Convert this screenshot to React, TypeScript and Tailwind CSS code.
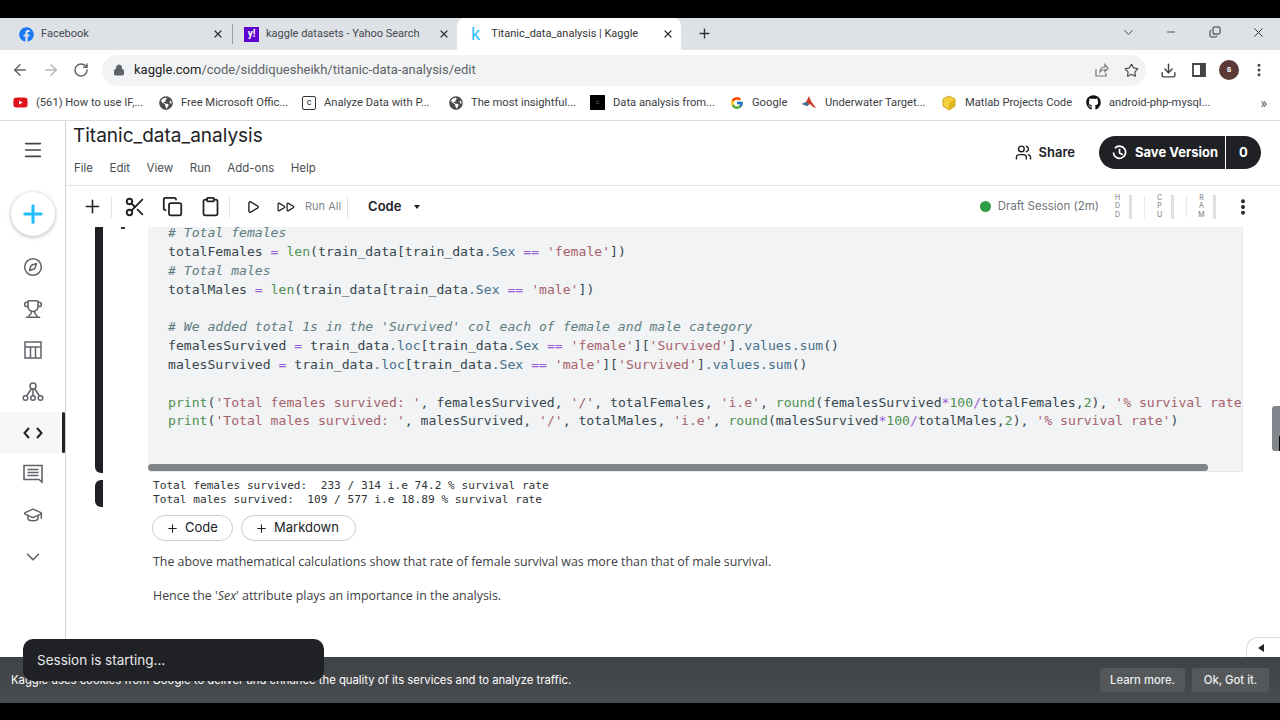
import type { ReactNode } from 'react';
import { Compass, Trophy, GraduationCap, ChevronDown, Scissors, Copy, Clipboard, Plus, Menu, Users, X, ArrowLeft, ArrowRight, RotateCw, Lock, Star, Download, Minus, MoreVertical, Play } from 'lucide-react';
import { FaFacebook, FaYoutube, FaGithub, FaGlobeAmericas } from 'react-icons/fa';
import { FcGoogle } from 'react-icons/fc';

const Cm = ({ children }: { children: ReactNode }) => <span className="italic text-[#5f7d80]">{children}</span>;
const Op = ({ children }: { children: ReactNode }) => <span className="text-[#9a5fd6]">{children}</span>;
const Fn = ({ children }: { children: ReactNode }) => <span className="text-[#4f9150]">{children}</span>;
const St = ({ children }: { children: ReactNode }) => <span className="text-[#a9626b]">{children}</span>;
const At = ({ children }: { children: ReactNode }) => <span className="text-[#47708c]">{children}</span>;

const bookmarks = [
  { w: 'w-[146px]', label: '(561) How to use IF,...', icon: <FaYoutube className="w-[15px] h-[15px] text-[#e0101c]" /> },
  { w: 'w-[143px]', label: 'Free Microsoft Offic...', icon: <FaGlobeAmericas className="w-[14px] h-[14px] text-[#4a4d50]" /> },
  { w: 'w-[147px]', label: 'Analyze Data with P...', icon: <span className="flex w-[14px] h-[14px] items-center justify-center border border-[#333] rounded-[2px] text-[9px] leading-none text-[#222]">c</span> },
  { w: 'w-[141px]', label: 'The most insightful...', icon: <FaGlobeAmericas className="w-[14px] h-[14px] text-[#4a4d50]" /> },
  { w: 'w-[140px]', label: 'Data analysis from...', icon: <span className="flex w-[15px] h-[15px] items-center justify-center bg-black text-[5px] leading-none text-white">:::</span> },
  { w: 'w-[71px]', label: 'Google', icon: <FcGoogle className="w-[14px] h-[14px]" /> },
  { w: 'w-[140px]', label: 'Underwater Target...', icon: (
    <svg viewBox="0 0 16 16" className="w-[16px] h-[16px]"><path d="M1 9l4-2 3-6 2 5 5 7-3-1-3-3-3 2z" fill="#c8402a" /><path d="M1 9l4-2 3 2-2 2z" fill="#3a6ea5" /></svg>
  ) },
  { w: 'w-[145px]', label: 'Matlab Projects Code', icon: (
    <svg viewBox="0 0 16 16" className="w-[16px] h-[16px]"><path d="M8 1l6 3v7l-6 4-6-4V4z" fill="#f4d13d" stroke="#c9a520" /><path d="M8 8l6-4v7l-6 4z" fill="#e3b51e" /></svg>
  ) },
  { w: 'w-[146px]', label: 'android-php-mysql...', icon: <FaGithub className="w-[15px] h-[15px] text-[#111]" /> },
];

function Tabs() {
  return (
    <div className="h-[32px] bg-[#dee1e6] flex items-end text-[11px] text-[#45494d] font-['Roboto',sans-serif]">
      <div className="w-[232px] h-full flex items-center pl-[19px] pr-[8px] gap-[7px]">
        <FaFacebook className="w-[15px] h-[15px] text-[#1877f2]" />
        <span className="flex-1">Facebook</span>
        <X className="w-[12px] h-[12px] text-[#333]" strokeWidth={2.5} />
      </div>
      <div className="w-px h-[20px] mb-[6px] bg-[#9aa0a6]" />
      <div className="w-[224px] h-full flex items-center pl-[11px] pr-[7px] gap-[7px]">
        <span className="flex w-[15px] h-[15px] items-center justify-center bg-[#5f01d1] text-[10px] font-bold leading-none text-white">y!</span>
        <span className="flex-1 whitespace-nowrap overflow-hidden">kaggle datasets - Yahoo Search</span>
        <X className="w-[12px] h-[12px] text-[#333]" strokeWidth={2.5} />
      </div>
      <div className="w-[224px] h-full bg-white rounded-t-[8px] flex items-center pl-[14px] pr-[7px] gap-[11px] text-[#333]">
        <span className="text-[17px] leading-none text-[#20beff] font-['Inter',sans-serif]">k</span>
        <span className="flex-1 whitespace-nowrap">Titanic_data_analysis | Kaggle</span>
        <X className="w-[12px] h-[12px] text-[#333]" strokeWidth={2.5} />
      </div>
      <Plus className="ml-[16px] mb-[9px] w-[15px] h-[15px] text-[#333]" strokeWidth={2.2} />
      <div className="flex-1 h-full flex items-center justify-end pr-[14px] text-[#333]">
        <ChevronDown className="w-[15px] h-[15px] -mt-[4px]" strokeWidth={1.4} />
        <Minus className="ml-[29px] w-[12px] h-[12px] -mt-[4px]" strokeWidth={1.6} />
        <Copy className="ml-[32px] w-[12px] h-[12px] -mt-[4px] -scale-y-100" strokeWidth={2} />
        <X className="ml-[30px] w-[15px] h-[15px] -mt-[4px]" strokeWidth={1.6} />
      </div>
    </div>
  );
}

function AddressBar() {
  return (
    <div className="h-[36px] pt-[4px] bg-white flex items-center pl-[11px] pr-[13px] text-[#5f6368] font-['Roboto',sans-serif]">
      <ArrowLeft className="w-[18px] h-[18px]" strokeWidth={2} />
      <ArrowRight className="ml-[13px] w-[18px] h-[18px] text-[#b5b8bc]" strokeWidth={2} />
      <RotateCw className="ml-[13px] w-[16px] h-[16px]" strokeWidth={2.2} />
      <div className="ml-[13px] w-[1044px] h-[31px] rounded-full bg-[#f1f3f4] flex items-center pl-[11px] pr-[7px]">
        <Lock className="w-[12px] h-[12px] text-[#5f6368]" fill="#5f6368" />
        <span className="ml-[9px] text-[13px] text-[#5f6368] flex-1 whitespace-nowrap">
          <span className="text-[#222]">kaggle.com</span>/code/siddiquesheikh/titanic-data-analysis/edit
        </span>
        <svg viewBox="0 0 16 16" className="w-[16px] h-[16px] text-[#777]" fill="none" stroke="currentColor" strokeWidth="1.2"><path d="M3 7v7h10v-3M7 10c0-3 2-5 5-5V2.500l3 4-3 3V7.500c-2 0-4 1-5 2.500z" /></svg>
        <Star className="ml-[15px] w-[15px] h-[15px] text-[#444]" strokeWidth={1.8} />
      </div>
      <Download className="ml-[14px] w-[17px] h-[17px] text-[#444]" strokeWidth={2} />
      <svg viewBox="0 0 14 14" className="ml-[15px] w-[14px] h-[14px] text-[#444]"><path d="M1 1h12v12H1z" fill="none" stroke="currentColor" strokeWidth="1.800" /><path d="M8 1h5v12H8z" fill="currentColor" /></svg>
      <span className="ml-[13px] flex w-[20px] h-[20px] items-center justify-center rounded-full bg-[#5b3a36] text-[9px] font-bold text-white">s</span>
      <MoreVertical className="ml-[12px] w-[16px] h-[16px] text-[#444]" strokeWidth={2.500} />
    </div>
  );
}

function Bookmarks() {
  return (
    <div className="h-[35px] bg-white border-b border-[#d8dadd] flex items-center pl-[13px] pr-[13px] text-[11.200px] text-[#3c4043] font-['Roboto',sans-serif]">
      {bookmarks.map((b) => (
        <div key={b.label} className={`${b.w} flex items-center gap-[8px] whitespace-nowrap`}>
          {b.icon}
          <span>{b.label}</span>
        </div>
      ))}
      <span className="ml-auto text-[14px] leading-none text-[#555]">»</span>
    </div>
  );
}

function Sidebar() {
  const icon = 'w-[20px] h-[20px] text-[#5f6368]';
  return (
    <aside className="w-[66px] shrink-0 border-r border-[#d0d2d4] flex flex-col items-center">
      <Menu className="ml-px mt-[18px] w-[22px] h-[22px] text-[#444]" strokeWidth={1.800} />
      <button className="ml-px mt-[31px] w-[44px] h-[44px] rounded-full bg-white shadow-[0_1px_4px_rgba(0,0,0,0.3)] flex items-center justify-center">
        <Plus className="w-[28px] h-[28px] text-[#20beff]" strokeWidth={2.6} />
      </button>
      <div className="mt-[10px] w-full flex flex-col items-center">
        <div className="pl-px h-[42px] flex items-center"><Compass className={icon} strokeWidth={1.800} /></div>
        <div className="pl-px h-[41px] flex items-center"><Trophy className={icon} strokeWidth={1.800} /></div>
        <div className="pl-px h-[42px] flex items-center">
          <svg viewBox="0 0 18 18" className="w-[18px] h-[18px] text-[#5f6368]" fill="none" stroke="currentColor" strokeWidth="1.500"><path d="M1 1h16v16H1zM1 6h16M6.500 6v11M11.500 6v11" /></svg>
        </div>
        <div className="pl-px h-[41px] flex items-center">
          <svg viewBox="0 0 22 20" className="w-[22px] h-[20px] text-[#5f6368]" fill="none" stroke="currentColor" strokeWidth="1.500"><circle cx="11" cy="4" r="3" /><circle cx="3.500" cy="16" r="2.300" /><circle cx="11" cy="16" r="2.300" /><circle cx="18.500" cy="16" r="2.300" /><path d="M9.500 6.500L4.500 14M11 7v7M12.500 6.500L17.500 14" /></svg>
        </div>
        <div className="relative pl-px w-full h-[41px] bg-[#f7f7f8] flex items-center justify-center">
          <svg viewBox="0 0 20 12" className="w-[20px] h-[12px] text-[#202124]" fill="none" stroke="currentColor" strokeWidth="2"><path d="M6 1L1.500 6 6 11M14 1l4.500 5L14 11" /></svg>
          <span className="absolute right-0 top-0 w-[3px] h-full rounded-[2px] bg-[#202124]" />
        </div>
        <div className="pl-px h-[41px] flex items-center">
          <svg viewBox="0 0 20 20" className="w-[20px] h-[20px] text-[#5f6368]" fill="none" stroke="currentColor" strokeWidth="1.600"><path d="M1 1.500h18v16.500l-3-2.500H1zM4.500 5.500h11M4.500 8.500h11M4.500 11.500h11" /></svg>
        </div>
        <div className="pl-px h-[42px] flex items-center"><GraduationCap className={icon} strokeWidth={1.800} /></div>
        <div className="pl-px h-[41px] flex items-center"><ChevronDown className="w-[22px] h-[22px] text-[#5f6368]" strokeWidth={1.800} /></div>
      </div>
    </aside>
  );
}

function Header() {
  return (
    <header className="h-[65px] shrink-0 border-b border-[#e4e5e7] flex items-start pl-[7px] pr-[19px]">
      <div>
        <div className="mt-px text-[19px] leading-[28px] text-[#202124]">Titanic_data_analysis</div>
        <nav className="mt-[9px] ml-px flex gap-[16.500px] text-[11.500px] leading-[18px] text-[#4b4e52]">
          <span>File</span><span>Edit</span><span>View</span><span>Run</span><span>Add-ons</span><span>Help</span>
        </nav>
      </div>
      <div className="ml-auto mt-[15px] flex items-center">
        <Users className="w-[17px] h-[17px] text-[#202124]" strokeWidth={2} />
        <span className="ml-[7px] text-[13px] font-semibold text-[#202124]">Share</span>
        <div className="ml-[24px] h-[33px] w-[162px] rounded-full bg-[#202124] flex items-center text-white text-[13px] font-bold">
          <svg viewBox="0 0 16 16" className="ml-[13px] w-[15px] h-[15px]" fill="none" stroke="currentColor" strokeWidth="1.800"><path d="M3 3.500A6.500 6.500 0 1 1 1.500 8M8 4v4.500l3.500 2" /></svg>
          <span className="ml-[8px] whitespace-nowrap">Save Version</span>
          <span className="ml-auto w-px h-full bg-[#fff]" />
          <span className="w-[35px] text-center">0</span>
        </div>
      </div>
    </header>
  );
}

function Stat({ letters }: { letters: string[] }) {
  return (
    <div className="flex items-center gap-[9px]">
      <div className="flex flex-col items-center w-[5px] text-[7px] leading-[8.500px] text-[#777]">
        {letters.map((l, i) => <span key={i}>{l}</span>)}
      </div>
      <span className="w-[3px] h-[24px] bg-[#dedfe0]" />
    </div>
  );
}

function Toolbar() {
  const sep = 'w-px h-[22px] bg-[#e3e4e6]';
  return (
    <div className="h-[41px] shrink-0 flex items-center pl-[16px] pr-[27px] text-[#202124]">
      <Plus className="w-[21px] h-[21px]" strokeWidth={1.800} />
      <span className={`ml-[8px] ${sep}`} />
      <Scissors className="ml-[12px] w-[22px] h-[22px]" strokeWidth={2} />
      <Copy className="ml-[16px] w-[21px] h-[21px]" strokeWidth={2} />
      <Clipboard className="ml-[17px] w-[21px] h-[21px]" strokeWidth={2} />
      <span className={`ml-[8px] ${sep}`} />
      <Play className="ml-[16px] w-[14px] h-[14px]" strokeWidth={2.400} />
      <span className="ml-[16px] flex">
        <Play className="w-[10px] h-[12px]" strokeWidth={3} />
        <Play className="-ml-[1px] w-[10px] h-[12px]" strokeWidth={3} />
      </span>
      <span className="ml-[10px] text-[11px] text-[#80868b]">Run All</span>
      <span className={`ml-[6px] ${sep}`} />
      <span className="ml-[20px] text-[13px] font-semibold">Code</span>
      <span className="ml-[13px] w-0 h-0 border-x-[3.500px] border-x-transparent border-t-[4px] border-t-[#202124]" />
      <span className="ml-auto w-[11px] h-[11px] rounded-full bg-[#2e9e44]" />
      <span className="ml-[7px] text-[11.500px] text-[#70757a]">Draft Session (2m)</span>
      <div className="ml-[16px] flex items-center gap-[12px]">
        <Stat letters={['H', 'D', 'D']} />
        <span className="w-px h-[22px] bg-[#e8e9ea]" />
        <Stat letters={['C', 'P', 'U']} />
        <span className="w-px h-[22px] bg-[#e8e9ea]" />
        <Stat letters={['R', 'A', 'M']} />
      </div>
      <MoreVertical className="ml-[17px] w-[20px] h-[20px]" strokeWidth={2.800} />
    </div>
  );
}

function CodeCell() {
  return (
    <div className="relative h-[245px] w-[1095px] overflow-hidden rounded-b-[3px] border-r border-b border-[#e6e8ea] bg-[#f1f3f4]">
      <pre className="-mt-[3px] pl-[20px] font-['DejaVu_Sans_Mono',monospace] text-[13.120px] leading-[18.850px] text-[#37474f]">
        <div><Cm># Total females</Cm></div>
        <div>totalFemales <Op>=</Op> <Fn>len</Fn>(train_data[train_data<At>.Sex</At> <Op>==</Op> <St>'female'</St>])</div>
        <div><Cm># Total males</Cm></div>
        <div>totalMales <Op>=</Op> <Fn>len</Fn>(train_data[train_data<At>.Sex</At> <Op>==</Op> <St>'male'</St>])</div>
        <div>&nbsp;</div>
        <div><Cm># We added total 1s in the 'Survived' col each of female and male category</Cm></div>
        <div>femalesSurvived <Op>=</Op> train_data<At>.loc</At>[train_data<At>.Sex</At> <Op>==</Op> <St>'female'</St>][<St>'Survived'</St>]<At>.values.sum</At>()</div>
        <div>malesSurvived <Op>=</Op> train_data<At>.loc</At>[train_data<At>.Sex</At> <Op>==</Op> <St>'male'</St>][<St>'Survived'</St>]<At>.values.sum</At>()</div>
        <div>&nbsp;</div>
        <div><Fn>print</Fn>(<St>'Total females survived: '</St>, femalesSurvived, <St>'/'</St>, totalFemales, <St>'i.e'</St>, <Fn>round</Fn>(femalesSurvived<Op>*</Op><Fn>100</Fn><Op>/</Op>totalFemales,<Fn>2</Fn>), <St>'% survival rate'</St>)</div>
        <div><Fn>print</Fn>(<St>'Total males survived: '</St>, malesSurvived, <St>'/'</St>, totalMales, <St>'i.e'</St>, <Fn>round</Fn>(malesSurvived<Op>*</Op><Fn>100</Fn><Op>/</Op>totalMales,<Fn>2</Fn>), <St>'% survival rate'</St>)</div>
      </pre>
      <div className="absolute bottom-0 left-0 w-[1060px] h-[7px] rounded-[4px] bg-[#808488]" />
    </div>
  );
}

function Notebook() {
  return (
    <div className="relative flex-1 min-h-0 overflow-hidden pl-[29px]">
      <div className="flex">
        <div className="w-[8px] h-[246px] rounded-bl-[6px] bg-[#202124]" />
        <span className="ml-[18px] mr-[23px] w-[4px] h-[2px] bg-[#333]" />
        <CodeCell />
      </div>
      <div className="flex mt-[7px]">
        <div className="w-[8px] h-[27px] rounded-l-[6px] bg-[#202124]" />
        <div className="ml-[50px] -mt-[1px]">
          <pre className="font-['DejaVu_Sans_Mono',monospace] text-[11.150px] leading-[14px] text-[#2f3336]">{`Total females survived:  233 / 314 i.e 74.2 % survival rate
Total males survived:  109 / 577 i.e 18.89 % survival rate`}</pre>
          <div className="-ml-px mt-[8px] flex gap-[8px] text-[13px] text-[#202124]">
            <button className="h-[26px] w-[81px] rounded-full border border-[#c8cacc] flex items-center pl-[13px] gap-[6px]"><Plus className="w-[13px] h-[13px]" />Code</button>
            <button className="h-[26px] w-[115px] rounded-full border border-[#c8cacc] flex items-center pl-[13px] gap-[6px]"><Plus className="w-[13px] h-[13px]" />Markdown</button>
          </div>
          <p className="mt-[12px] text-[12.400px] leading-[17px] text-[#3c4043] font-['Open_Sans',sans-serif]">The above mathematical calculations show that rate of female survival was more than that of male survival.</p>
          <p className="mt-[17px] text-[12.400px] leading-[17px] text-[#3c4043] font-['Open_Sans',sans-serif]">Hence the '<em>Sex</em>' attribute plays an importance in the analysis.</p>
        </div>
      </div>
      {/* scrollbar y panel toggle lie over the notebook */}
      <div className="absolute right-0 top-[179px] w-[8px] h-[45px] rounded-l-[3px] bg-[#80868b]">
        <span className="absolute right-0 bottom-0 w-px h-[15px] bg-black" />
      </div>
      <div className="absolute right-0 bottom-0 w-[34px] h-[20px] rounded-tl-[12px] border-l border-t border-[#d8dadc] bg-white flex items-center pl-[11px]">
        <span className="w-0 h-0 border-y-[4.500px] border-y-transparent border-r-[6px] border-r-[#202124]" />
      </div>
    </div>
  );
}

export default function App() {
  return (
    <div className="relative w-[1280px] h-[720px] overflow-hidden bg-white flex flex-col font-['Inter',sans-serif]">
      <div className="h-[18px] shrink-0 bg-black" />
      <Tabs />
      <AddressBar />
      <Bookmarks />
      <main className="flex-1 min-h-0 flex">
        <Sidebar />
        <div className="flex-1 min-w-0 flex flex-col">
          <Header />
          <Toolbar />
          <Notebook />
        </div>
      </main>
      <div className="h-[46px] shrink-0 bg-gradient-to-b from-[#3f4245] to-[#4a4d50] flex items-center pl-[11px] pr-[11px] text-white text-[11.300px]">
        <span className="whitespace-nowrap">Kaggle uses cookies from Google to deliver and enhance the quality of its services and to analyze traffic.</span>
        <button className="ml-auto w-[85px] h-[24px] rounded-[3px] bg-[#55585b] font-medium text-[#eceef0]">Learn more.</button>
        <button className="ml-[7px] w-[77px] h-[24px] rounded-[3px] bg-[#55585b] font-medium text-[#eceef0]">Ok, Got it.</button>
      </div>
      <div className="h-[17px] shrink-0 bg-black" />
      <div className="absolute left-[23px] top-[639px] w-[301px] h-[42px] rounded-[10px] bg-[#202124] flex items-center pl-[14px] text-[13.500px] text-[#e8eaed]">
        Session is starting...
      </div>
    </div>
  );
}
